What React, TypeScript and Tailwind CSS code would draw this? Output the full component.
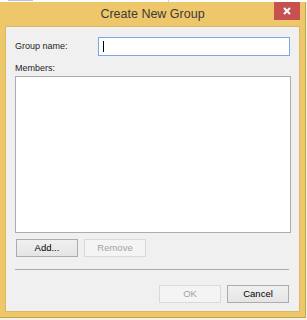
export default function App() {
  const btn =
    "h-[18px] w-[62px] border border-[#acacac] bg-gradient-to-b from-[#f0f0f0] to-[#e5e5e5] text-[9.5px] text-black flex items-center justify-center";
  const btnDisabled =
    "h-[18px] w-[62px] border border-[#d9d9d9] bg-[#f4f4f4] text-[9.5px] text-[#a3a3a3] flex items-center justify-center";
  return (
    <div className="w-[307px] h-[320px] overflow-hidden bg-[#f4f1ea] font-['Liberation_Sans',Arial,sans-serif]">
      <div className="h-[2px] bg-white flex">
        <div className="ml-[8px] w-[25px] h-[1px] bg-[#b8c4d4]" />
        <div className="ml-[135px] w-[1px] h-[2px] bg-[#d0d0d0]" />
      </div>
      <div className="relative w-[306px] h-[316px] bg-[#efc76b] border-r border-b border-[#c9a24e] flex flex-col">
        <div className="h-[24px] flex items-center justify-center text-[12.5px] text-[#3a3a3a]">
          Create New Group
        </div>
        <div className="absolute right-[5px] top-0 w-[26px] h-[18px] bg-[#c75050] flex items-center justify-center">
          <svg width="8" height="8" viewBox="0 0 8 8">
            <path d="M1 1 L7 7 M7 1 L1 7" stroke="white" strokeWidth="2" />
          </svg>
        </div>
        <div className="ml-[5px] w-[295px] h-[286px] border border-[#dcb862] bg-[#f0f0f0] px-[9px] pt-[10px] flex flex-col">
          <div className="flex items-center h-[19px]">
            <div className="w-[83px] text-[9px] text-[#1e1e1e]">Group name:</div>
            <div className="w-[193px] h-[19px] border border-[#7aa7e5] bg-white flex items-center pl-[4px]">
              <div className="w-[1px] h-[11px] bg-black" />
            </div>
          </div>
          <div className="mt-[6px] h-[12px] leading-[12px] text-[9px] text-[#1e1e1e]">Members:</div>
          <div className="mt-[2px] w-[276px] h-[157px] border border-[#acacac] bg-white" />
          <div className="mt-[6px] flex gap-[6px] pl-[1px]">
            <div className={btn}>Add...</div>
            <div className={btnDisabled}>Remove</div>
          </div>
          <div className="mt-[12px] w-[274px] h-[1px] bg-[#a8a8a8]" />
          <div className="mt-[15px] flex justify-end gap-[6px] pr-[1px]">
            <div className={btnDisabled}>OK</div>
            <div className={btn}>Cancel</div>
          </div>
        </div>
      </div>
    </div>
  );
}
